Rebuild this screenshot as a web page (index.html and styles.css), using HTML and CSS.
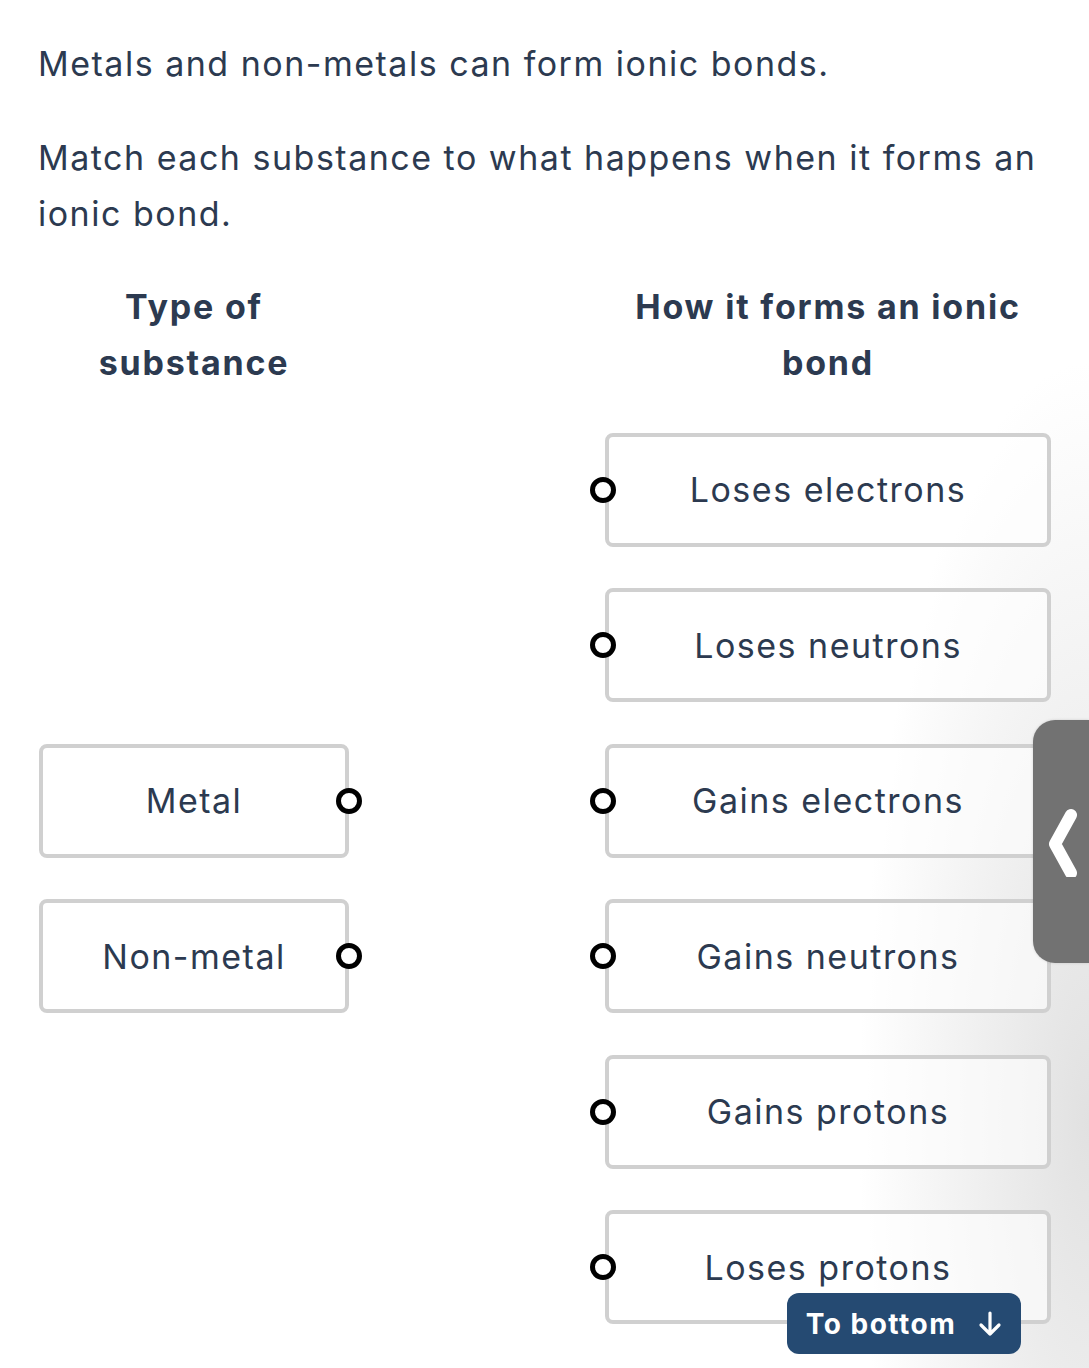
FILE: index.html
```html
<!DOCTYPE html>
<html lang="en">
  <head>
    <meta charset="UTF-8" />
    <meta name="viewport" content="width=device-width, initial-scale=1.0" />
    <title>Ionic bonds - matching</title>
    <link rel="stylesheet" href="styles.css">
  </head>
  <body>
    <div class="page">
      <p class="question">Metals and non-metals can form ionic bonds.</p>
      <p class="question">Match each substance to what happens when it forms an ionic bond.</p>

      <!-- Matching grid: left column = substances, right column = outcomes -->
      <div class="match-grid">
        <h3 class="col-title left-title">Type of substance</h3>
        <h3 class="col-title right-title">How it forms an ionic bond</h3>

        <div class="option left row-3">Metal<span class="dot dot-right"></span></div>
        <div class="option left row-4">Non-metal<span class="dot dot-right"></span></div>

        <div class="option right row-1"><span class="dot dot-left"></span>Loses electrons</div>
        <div class="option right row-2"><span class="dot dot-left"></span>Loses neutrons</div>
        <div class="option right row-3"><span class="dot dot-left"></span>Gains electrons</div>
        <div class="option right row-4"><span class="dot dot-left"></span>Gains neutrons</div>
        <div class="option right row-5"><span class="dot dot-left"></span>Gains protons</div>
        <div class="option right row-6"><span class="dot dot-left"></span>Loses protons</div>
      </div>
    </div>

    <!-- side drawer handle -->
    <div class="side-tab">
      <svg width="30" height="70" viewBox="0 0 30 70">
        <path d="M23 8 L7 37 L23 66" fill="none" stroke="#fff" stroke-width="12" stroke-linecap="round" stroke-linejoin="round"/>
      </svg>
    </div>

    <button class="to-bottom">To bottom
      <svg width="24" height="26" viewBox="0 0 24 26">
        <path d="M12 2 V23 M3 14 L12 23 L21 14" fill="none" stroke="#fff" stroke-width="3.2" stroke-linecap="round" stroke-linejoin="round"/>
      </svg>
    </button>
  </body>
</html>
```

FILE: styles.css
```css
html {
  min-height: 100%;
  background-color: #fff;
}

body {
  font-family: Inter, "Noto Sans", sans-serif;
  color: #2c3a50;
  margin: 0;
  padding: 0;
  min-height: 1368px;
  letter-spacing: 1.5px;
  background:
    radial-gradient(ellipse 230px 760px at 100% 82%, #e1e1e1 0%, rgba(255, 255, 255, 0) 100%),
    #fff;
}

.page {
  padding: 36px 38px 0 38px;
}

.question {
  font-size: 34px;
  line-height: 56px;
  margin: 0 0 38px 0;
}

.match-grid {
  display: grid;
  grid-template-columns: 310px 446px;
  column-gap: 256px;
  row-gap: 41.5px;
  margin-left: 1px;
  margin-top: -1px;
}

.col-title {
  font-size: 34px;
  line-height: 56px;
  font-weight: 700;
  letter-spacing: 1.8px;
  text-align: center;
  margin: 0;
  grid-row: 1;
}

.left-title {
  grid-column: 1;
  padding: 0 40px;
}

.right-title {
  grid-column: 2;
  padding: 0 20px;
}

.option {
  position: relative;
  height: 114px;
  box-sizing: border-box;
  border: 4px solid #d0d0d0;
  border-radius: 8px;
  background-color: rgba(255, 255, 255, 0.6);
  display: flex;
  align-items: center;
  justify-content: center;
  font-size: 34px;
}

.option.left {
  grid-column: 1;
}

.option.right {
  grid-column: 2;
}

.row-1 { grid-row: 2; }
.row-2 { grid-row: 3; }
.row-3 { grid-row: 4; }
.row-4 { grid-row: 5; }
.row-5 { grid-row: 6; }
.row-6 { grid-row: 7; }

.dot {
  position: absolute;
  top: 50%;
  width: 26px;
  height: 26px;
  margin-top: -13px;
  box-sizing: border-box;
  border: 5px solid #000;
  border-radius: 50%;
  background-color: #fff;
}

.dot-left {
  left: -19px;
}

.dot-right {
  right: -17px;
}

.side-tab {
  position: fixed;
  top: 720px;
  right: 0;
  width: 56px;
  height: 243px;
  background-color: #727272;
  border-radius: 22px 0 0 22px;
  display: flex;
  align-items: center;
  justify-content: center;
  box-shadow: 0 0 3px rgba(0, 0, 0, 0.15);
}

.side-tab svg {
  margin-left: 4px;
}

.to-bottom {
  position: fixed;
  right: 68px;
  bottom: 14px;
  width: 234px;
  height: 61px;
  border: none;
  border-radius: 12px;
  background-color: #254a72;
  color: #fff;
  font-family: Inter, "Noto Sans", sans-serif;
  font-size: 28px;
  font-weight: 700;
  letter-spacing: 1.5px;
  display: flex;
  align-items: center;
  justify-content: center;
  gap: 22px;
  padding: 0;
}
```
